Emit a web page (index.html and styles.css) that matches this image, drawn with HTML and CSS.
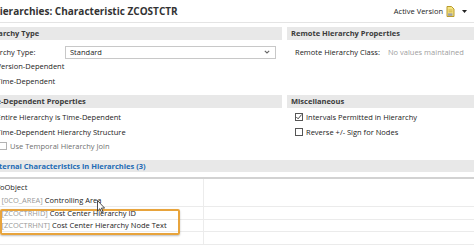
FILE: index.html
```html
<!DOCTYPE html>
<html>
<head>
<meta charset="utf-8">
<link rel="stylesheet" href="styles.css">
</head>
<body>
<div class="page">
  <header class="titlebar">
    <h1 class="title">Hierarchies: Characteristic ZCOSTCTR</h1>
    <div class="version">
      <span>Active Version</span>
      <svg class="doc-icon" width="9" height="11" viewBox="0 0 9 11">
        <path d="M1 0.5h4.5l2.5 2.5v7.5h-7z" fill="#f4e483" stroke="#b99a2c" stroke-width="1"/>
        <path d="M2.5 4h4M2.5 5.8h4" stroke="#c8a53a" stroke-width="0.8"/>
        <rect x="2" y="7.3" width="4.5" height="2.6" fill="#a3a3a3"/>
      </svg>
      <svg class="caret" width="5" height="3" viewBox="0 0 5 3"><path d="M0 0h5l-2.5 3z" fill="#222"/></svg>
    </div>
  </header>

  <div class="grid">
    <section class="sec">
      <div class="band">Hierarchy Type</div>
      <div class="body body-top">
        <div class="field">
          <span class="label">Hierarchy Type:</span>
          <div class="select">
            <span>Standard</span>
            <svg width="6" height="4" viewBox="0 0 6 4"><path d="M0.8 0.8l2.2 2.2 2.2-2.2" fill="none" stroke="#666" stroke-width="1.1"/></svg>
          </div>
        </div>
        <div class="opt"><span class="box"></span>Version-Dependent</div>
        <div class="opt"><span class="box"></span>Time-Dependent</div>
      </div>
    </section>

    <section class="sec">
      <div class="band">Remote Hierarchy Properties</div>
      <div class="body body-top body-right">
        <div class="field">
          <span class="label-r">Remote Hierarchy Class:</span>
          <span class="muted">No values maintained</span>
        </div>
      </div>
    </section>

    <section class="sec">
      <div class="band">Time-Dependent Properties</div>
      <div class="body body-mid">
        <div class="opt"><span class="radio"></span>Entire Hierarchy is Time-Dependent</div>
        <div class="opt"><span class="radio"></span>Time-Dependent Hierarchy Structure</div>
        <div class="opt opt-sub disabled"><span class="box"></span>Use Temporal Hierarchy Join</div>
      </div>
    </section>

    <section class="sec">
      <div class="band">Miscellaneous</div>
      <div class="body body-mid body-right">
        <div class="opt"><span class="box checked">
          <svg width="8" height="8" viewBox="0 0 8 8"><path d="M1.3 4l1.8 1.8 3.6-4.3" fill="none" stroke="#333" stroke-width="0.9"/></svg>
        </span>Intervals Permitted in Hierarchy</div>
        <div class="opt"><span class="box"></span>Reverse +/- Sign for Nodes</div>
      </div>
    </section>
  </div>

  <section class="chars">
    <div class="band band-blue">External Characteristics in Hierarchies (3)</div>
    <div class="table">
      <div class="row head"><div class="c1">InfoObject</div><div class="c2"></div></div>
      <div class="row"><div class="c1 item"><span class="key">[0CO_AREA]</span>Controlling Area</div><div class="c2"></div></div>
      <div class="row"><div class="c1 item"><span class="key">[ZCOCTRHID]</span>Cost Center Hierarchy ID</div><div class="c2"></div></div>
      <div class="row"><div class="c1 item"><span class="key">[ZCOCTRHNT]</span>Cost Center Hierarchy Node Text</div><div class="c2"></div></div>
      <div class="row"><div class="c1"></div><div class="c2"></div></div>
      <div class="highlight"></div>
      <svg class="cursor" width="8" height="13" viewBox="0 0 8 13">
        <path d="M0.5 0.5v10.5l2.4-2.3 1.7 3.8 1.5-0.7-1.7-3.7h3.2z" fill="#fff" stroke="#222" stroke-width="0.8"/>
      </svg>
    </div>
  </section>
</div>
</body>
</html>
```
FILE: styles.css
```css
* { box-sizing: border-box; margin: 0; padding: 0; }
html, body { width: 474px; height: 248px; overflow: hidden; background: #fff; }
body { font-family: "Open Sans", "Noto Sans", sans-serif; font-size: 7.5px; color: #222; }

.page { margin-left: -24px; width: 498px; position: relative; }

.titlebar {
  height: 23px;
  display: flex;
  align-items: center;
  justify-content: space-between;
  border-bottom: 1px solid #e4e4e4;
  padding: 0 7px 0 16px;
}
.title { font-size: 10px; font-weight: 700; color: #333; white-space: nowrap; }
.version { display: flex; align-items: center; gap: 3px; color: #222; white-space: nowrap; }
.caret { margin-left: 4px; }

.grid {
  display: grid;
  grid-template-columns: 311px 187px;
  grid-template-rows: 68px 65px;
  margin-top: 4px;
}
.grid > .sec:nth-child(odd) { margin-right: 5px; }

.band {
  height: 13px;
  line-height: 13px;
  background: #e8e8e8;
  font-weight: 700;
  color: #3a3a3a;
  padding-left: 6.5px;
  white-space: nowrap;
}
.grid > .sec:nth-child(even) .band { padding-left: 4px; }

.body-top { padding-top: 5px; }
.body-mid { padding-top: 2px; }
.body-right { padding-left: 8px; }

.field { height: 14px; display: flex; align-items: center; white-space: nowrap; }
.label { width: 89px; padding-left: 5px; flex: none; }
.label-r { margin-right: 8px; flex: none; }
.select {
  width: 211px;
  height: 13px;
  border: 1px solid #c8c8c8;
  background: #fff;
  display: flex;
  align-items: center;
  justify-content: space-between;
  padding: 0 5px 0 4px;
}
.muted { color: #a0a0a0; }

.opt { height: 14.5px; display: flex; align-items: center; padding-left: 9.5px; white-space: nowrap; }
.body-right .opt { padding-left: 0; }
.opt-sub { padding-left: 23px; }
.disabled { color: #707070; }

.box, .radio {
  width: 8px; height: 8px;
  border: 1px solid #555;
  background: #fff;
  margin-right: 3px;
  flex: none;
  position: relative;
}
.radio { border-radius: 50%; }
.disabled .box { border-color: #b3b3b3; }
.checked svg { position: absolute; left: -1px; top: -1px; }

.band-blue { color: #226bb5; padding-left: 14.5px; height: 12px; line-height: 12px; }

.table { margin-top: 5px; border-top: 2px solid #d2d2d2; position: relative; }
.row { display: flex; height: 12.5px; border-bottom: 1px solid #ebebeb; }
.row.head { height: 15.5px; border-bottom: none; }
.c1 { width: 228px; border-right: 1px solid #ececec; padding-left: 14.8px; display: flex; align-items: center; white-space: nowrap; }
.c1.item { padding-left: 25.5px; }
.c2 { flex: 1; }
.key { color: #999; margin-right: 2px; }

.highlight {
  position: absolute;
  left: 24px; top: 30px;
  width: 180px; height: 26px;
  border: 2px solid #e8a43c;
  border-radius: 2px;
  box-shadow: 0 1px 2px rgba(0,0,0,0.25);
}
.cursor { position: absolute; left: 121px; top: 21px; }
```
